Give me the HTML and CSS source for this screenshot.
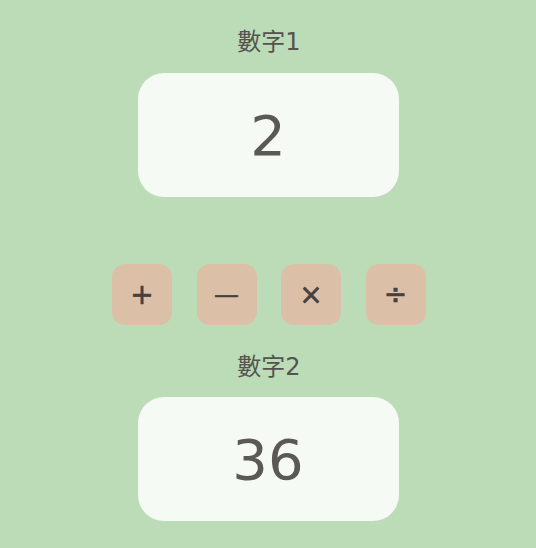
FILE: index.html
```html
<!DOCTYPE html>
<html lang="zh-Hant">
<head>
<meta charset="utf-8">
<link rel="stylesheet" href="styles.css">
</head>
<body>
<main class="calc">
  <div class="label label-first">數字1</div>
  <div class="box">2</div>
  <div class="ops">
    <button class="op">+</button>
    <button class="op op-minus">—</button>
    <button class="op">×</button>
    <button class="op">÷</button>
  </div>
  <div class="label label-second">數字2</div>
  <div class="box">36</div>
</main>
</body>
</html>
```
FILE: styles.css
```css
html, body {
  margin: 0;
  padding: 0;
  background: #bbdcb7;
}
body {
  width: 536px;
  height: 548px;
  overflow: hidden;
  font-family: "DejaVu Sans", "Noto Sans CJK TC", sans-serif;
}
.calc {
  display: flex;
  flex-direction: column;
  align-items: center;
  padding-top: 26px;
}
.label {
  font-size: 24px;
  line-height: 32px;
  color: #55534f;
  padding-left: 2px;
}
.label-first {
  margin-bottom: 15px;
}
.label-second {
  margin-bottom: 14px;
}
.box {
  width: 261px;
  height: 124px;
  border-radius: 26px;
  background: #f5faf4;
  color: #5a5955;
  font-size: 56px;
  display: flex;
  align-items: center;
  justify-content: center;
}
.ops {
  display: flex;
  gap: 24.5px;
  margin-top: 67px;
  margin-bottom: 26px;
  padding-left: 1.5px;
}
.op {
  width: 60px;
  height: 61px;
  border: none;
  border-radius: 13px;
  background: #dbc0a7;
  color: #45413f;
  font-family: "DejaVu Sans", sans-serif;
  font-size: 28px;
  padding: 0;
  display: flex;
  align-items: center;
  justify-content: center;
  -webkit-text-stroke: 0.6px #45413f;
}
.op-minus {
  font-size: 25px;
}
```
